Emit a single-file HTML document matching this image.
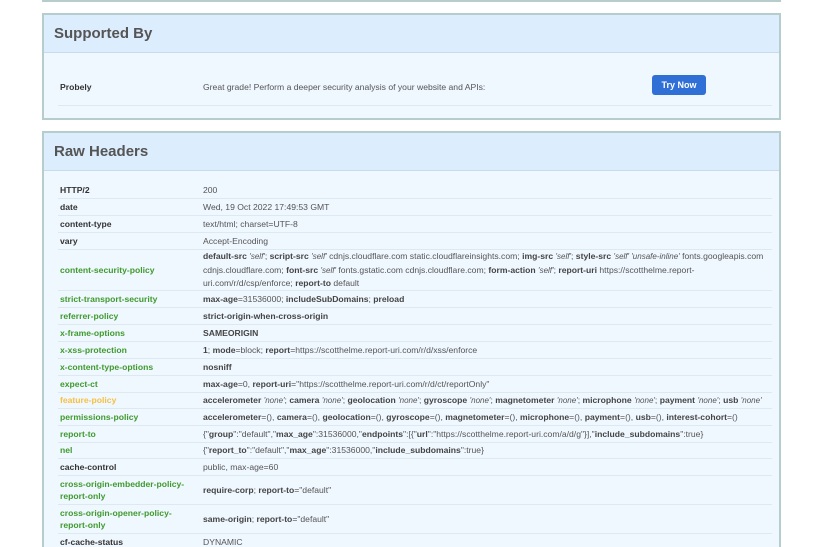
<!DOCTYPE html>
<html><head><meta charset="utf-8"><style>
*{margin:0;padding:0;box-sizing:border-box}
html,body{width:821px;height:547px;overflow:hidden}
body{background:#fff;font-family:"Liberation Sans",sans-serif;position:relative}
.box{position:absolute;left:42px;width:739px;border:2px solid #b7cccc;background:#eff7ff}
.hd{position:absolute;left:0;right:0;top:0;height:38px;background:#dcedfd;border-bottom:1px solid #c5dcef}
.hd h2{position:absolute;left:10px;top:10px;font-size:15px;font-weight:bold;color:#555}
.r{position:absolute;left:14px;width:714px;border-bottom:1px solid #dde8f0;display:flex;align-items:center;font-size:8.6px;line-height:12.5px;color:#555}
.k{position:absolute;left:2px;font-weight:bold;color:#333}
.v{position:absolute;left:145px;right:0}
.g{color:#3f9a2c}.y{color:#f6c041}
.v b{color:#444}.v i{font-size:8px}
.btn{position:absolute;left:608px;top:60px;width:54px;height:20px;background:#2f6fd6;border-radius:3px;color:#fff;font-weight:bold;font-size:9px;text-align:center;line-height:20px}
</style></head><body>
<div style="position:absolute;left:42px;top:-10px;width:739px;height:12px;border:2px solid #b7cccc;background:#eff7ff"></div>
<div class="box" style="top:13px;height:107px">
<div class="hd"><h2>Supported By</h2></div>
<div class="r" style="top:55px;height:36px"><span class="k">Probely</span><span class="v">Great grade! Perform a deeper security analysis of your website and APIs:</span></div>
<div class="btn">Try Now</div>
</div>
<div class="box" style="top:131px;height:430px">
<div class="hd"><h2>Raw Headers</h2></div>
<div class="r" style="top:49px;height:17px"><span class="k">HTTP/2</span><span class="v">200</span></div>
<div class="r" style="top:66px;height:17px"><span class="k">date</span><span class="v">Wed, 19 Oct 2022 17:49:53 GMT</span></div>
<div class="r" style="top:83px;height:17px"><span class="k">content-type</span><span class="v">text/html; charset=UTF-8</span></div>
<div class="r" style="top:100px;height:17px"><span class="k">vary</span><span class="v">Accept-Encoding</span></div>
<div class="r" style="top:117px;height:41px"><span class="k g">content-security-policy</span><span class="v"><b>default-src</b> <i>'self'</i>; <b>script-src</b> <i>'self'</i> cdnjs.cloudflare.com static.cloudflareinsights.com; <b>img-src</b> <i>'self'</i>; <b>style-src</b> <i>'self' 'unsafe-inline'</i> fonts.googleapis.com<br>cdnjs.cloudflare.com; <b>font-src</b> <i>'self'</i> fonts.gstatic.com cdnjs.cloudflare.com; <b>form-action</b> <i>'self'</i>; <b>report-uri</b> https://scotthelme.report-<br>uri.com/r/d/csp/enforce; <b>report-to</b> default</span></div>
<div class="r" style="top:158px;height:17px"><span class="k g">strict-transport-security</span><span class="v"><b>max-age</b>=31536000; <b>includeSubDomains</b>; <b>preload</b></span></div>
<div class="r" style="top:175px;height:17px"><span class="k g">referrer-policy</span><span class="v"><b>strict-origin-when-cross-origin</b></span></div>
<div class="r" style="top:192px;height:17px"><span class="k g">x-frame-options</span><span class="v"><b>SAMEORIGIN</b></span></div>
<div class="r" style="top:209px;height:17px"><span class="k g">x-xss-protection</span><span class="v"><b>1</b>; <b>mode</b>=block; <b>report</b>=https://scotthelme.report-uri.com/r/d/xss/enforce</span></div>
<div class="r" style="top:226px;height:17px"><span class="k g">x-content-type-options</span><span class="v"><b>nosniff</b></span></div>
<div class="r" style="top:243px;height:17px"><span class="k g">expect-ct</span><span class="v"><b>max-age</b>=0, <b>report-uri</b>="https://scotthelme.report-uri.com/r/d/ct/reportOnly"</span></div>
<div class="r" style="top:260px;height:16px"><span class="k y">feature-policy</span><span class="v"><b>accelerometer</b> <i>'none'</i>; <b>camera</b> <i>'none'</i>; <b>geolocation</b> <i>'none'</i>; <b>gyroscope</b> <i>'none'</i>; <b>magnetometer</b> <i>'none'</i>; <b>microphone</b> <i>'none'</i>; <b>payment</b> <i>'none'</i>; <b>usb</b> <i>'none'</i></span></div>
<div class="r" style="top:276px;height:17px"><span class="k g">permissions-policy</span><span class="v"><b>accelerometer</b>=(), <b>camera</b>=(), <b>geolocation</b>=(), <b>gyroscope</b>=(), <b>magnetometer</b>=(), <b>microphone</b>=(), <b>payment</b>=(), <b>usb</b>=(), <b>interest-cohort</b>=()</span></div>
<div class="r" style="top:293px;height:17px"><span class="k g">report-to</span><span class="v">{"<b>group</b>":"default","<b>max_age</b>":31536000,"<b>endpoints</b>":[{"<b>url</b>":"https://scotthelme.report-uri.com/a/d/g"}],"<b>include_subdomains</b>":true}</span></div>
<div class="r" style="top:310px;height:16px"><span class="k g">nel</span><span class="v">{"<b>report_to</b>":"default","<b>max_age</b>":31536000,"<b>include_subdomains</b>":true}</span></div>
<div class="r" style="top:326px;height:17px"><span class="k">cache-control</span><span class="v">public, max-age=60</span></div>
<div class="r" style="top:343px;height:29px"><span class="k g">cross-origin-embedder-policy-<br>report-only</span><span class="v"><b>require-corp</b>; <b>report-to</b>="default"</span></div>
<div class="r" style="top:372px;height:29px"><span class="k g">cross-origin-opener-policy-<br>report-only</span><span class="v"><b>same-origin</b>; <b>report-to</b>="default"</span></div>
<div class="r" style="top:401px;height:17px"><span class="k">cf-cache-status</span><span class="v">DYNAMIC</span></div>
</div>
</body></html>
